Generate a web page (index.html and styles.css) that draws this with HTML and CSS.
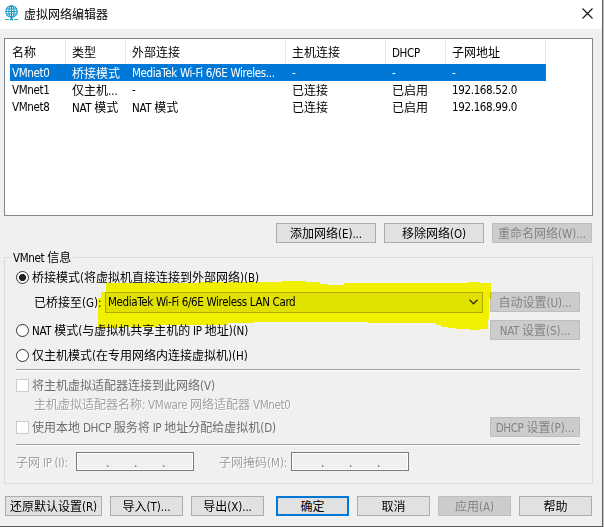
FILE: index.html
```html
<!DOCTYPE html>
<html lang="zh-CN">
<head>
<meta charset="utf-8">
<title>虚拟网络编辑器</title>
<link rel="stylesheet" href="styles.css">
</head>
<body>
<div class="window">
  <header class="titlebar">
    <svg class="logo" width="14" height="16" viewBox="0 0 14 16" fill="none">
      <g stroke="#1397c4" stroke-width="1.1"><circle cx="6.5" cy="6.5" r="5.7"/><ellipse cx="6.5" cy="6.5" rx="2.6" ry="5.7"/><path d="M1.5 4h10M1 6.500h11M1.500 9h10M6.500 1v11"/></g>
      <path d="M0 14.500h4M9 14.500h4" stroke="#29b7a5"/><path d="M5 14.500h3M6.500 12v2" stroke="#1397c4" stroke-width="1.400"/>
    </svg>
    <h1>虚拟网络编辑器</h1>
    <svg class="close" width="11" height="11" viewBox="0 0 11 11"><path d="M.5.5l10 10M10.500.5l-10 10" stroke="#111" stroke-width="1.100"/></svg>
  </header>
  <section class="table">
    <div class="tr head"><span>名称</span><span>类型</span><span>外部连接</span><span>主机连接</span><span class="l">DHCP</span><span>子网地址</span></div>
    <div class="tr selected"><span class="l">VMnet0</span><span>桥接模式</span><span class="l">MediaTek Wi-Fi 6/6E Wireles...</span><span class="l">-</span><span class="l">-</span><span class="l">-</span></div>
    <div class="tr"><span class="l">VMnet1</span><span>仅主机<span class="p">...</span></span><span class="l">-</span><span>已连接</span><span>已启用</span><span class="l">192.168.52.0</span></div>
    <div class="tr"><span class="l">VMnet8</span><span><span class="l">NAT </span>模式</span><span><span class="l">NAT </span>模式</span><span>已连接</span><span>已启用</span><span class="l">192.168.99.0</span></div>
  </section>
  <div class="actions">
    <button>添加网络<span class="p">(E)...</span></button><button>移除网络<span class="p">(O)</span></button><button disabled>重命名网络<span class="p">(W)...</span></button>
  </div>
  <fieldset class="group">
    <legend><span class="l">VMnet </span>信息</legend>
    <div class="row r1"><i class="radio on"></i><span>桥接模式<span class="p">(</span>将虚拟机直接连接到外部网络<span class="p">)(B)</span></span></div>
    <div class="row r2">
      <span class="bridge">已桥接至<span class="p">(G):</span></span>
      <div class="select"><span class="l">MediaTek Wi-Fi 6/6E Wireless LAN Card</span><svg width="9" height="6" viewBox="0 0 9 6"><path d="M.5.8l4 4 4-4" fill="none" stroke="#333" stroke-width="1.300"/></svg></div>
      <button disabled>自动设置<span class="p">(U)...</span></button>
      <svg class="marker" width="394" height="50" viewBox="0 0 394 50"><path fill="#ff0" d="M8 2H100V1H184V0H208V1H222V3H230V4H246V2H370V1H382V2H393V18H391V38H390V48H382V49H372V48H358V47H350V46H343V44H338V42H270V41H156V42H130V44H60V46H26V47H0V17H3V11H8Z"/></svg>
    </div>
    <div class="row r3"><i class="radio"></i><span><span class="l">NAT </span>模式<span class="p">(</span>与虚拟机共享主机的<span class="l"> IP </span>地址<span class="p">)(N)</span></span><button disabled><span class="l">NAT </span>设置<span class="p">(S)...</span></button></div>
    <div class="row r4"><i class="radio"></i><span>仅主机模式<span class="p">(</span>在专用网络内连接虚拟机<span class="p">)(H)</span></span></div>
    <hr>
    <div class="row r5"><i class="check"></i><span>将主机虚拟适配器连接到此网络<span class="p">(V)</span></span></div>
    <div class="row r6"><span>主机虚拟适配器名称<span class="l">: VMware </span>网络适配器<span class="l"> VMnet0</span></span></div>
    <div class="row r7"><i class="check"></i><span>使用本地<span class="l"> DHCP </span>服务将<span class="l"> IP </span>地址分配给虚拟机<span class="p">(D)</span></span><button disabled><span class="l">DHCP </span>设置<span class="p">(P)...</span></button></div>
    <hr>
    <div class="row r8"><span class="ip-label">子网<span class="l"> IP (I):</span></span><div class="ip"><b>.</b><b>.</b><b>.</b></div><span class="mask-label">子网掩码<span class="p">(M):</span></span><div class="ip"><b>.</b><b>.</b><b>.</b></div></div>
  </fieldset>
  <footer>
    <button>还原默认设置<span class="p">(R)</span></button><button>导入<span class="p">(T)...</span></button><button>导出<span class="p">(X)...</span></button><button class="primary">确定</button><button>取消</button><button disabled>应用<span class="p">(A)</span></button><button>帮助</button>
  </footer>
</div>
</body>
</html>
```

FILE: styles.css
```css
* { box-sizing: border-box; }
body { margin: 0; background: #c4c4c4; }
.window { display: flow-root; width: 603px; height: 527px; background: #f0f0f0; border-right: 1px solid #5c5c5c; border-bottom: 1px solid #5c5c5c; font: 12px/16px "Noto Sans CJK SC", sans-serif; color: #000; overflow: hidden; }
span { white-space: pre; }
.l, .p { font-family: "DejaVu Sans Condensed", "DejaVu Sans", sans-serif; font-stretch: condensed; font-size: 11.5px; line-height: 1; letter-spacing: -0.35px; }
.p { letter-spacing: -0.05px; }
.titlebar { height: 29px; background: #fff; display: flex; align-items: flex-start; padding: 5px 9px 0 5px; }
.titlebar h1 { font: inherit; margin: 1px 0 0 5px; flex: 1; }
.close { margin-top: 3px; }
.table { width: 589px; height: 178px; margin: 9px 0 0 4px; background: #fff; border: 1px solid #828790; }
.tr { display: grid; grid-template-columns: 56px 60px 160px 100px 60px 100px; width: 536px; height: 17px; margin-left: 5px; }
.tr > span { padding-left: 2px; height: 17px; line-height: 17px; overflow: hidden; }
.tr > span + span { padding-left: 6px; }
.tr > .l { line-height: 19px; }
.head { height: 25px; padding-top: 1px; }
.head > span { height: 24px; border-right: 1px solid #e5e5e5; line-height: 24px; }
.head > .l { line-height: 26px; }
.selected { background: #0078d7; color: #fff; }
button { height: 20px; padding: 0; border: 1px solid #adadad; background: #e1e1e1; font: inherit; line-height: 18px; color: #000; white-space: pre; }
button:disabled { background: #ccc; border-color: #bfbfbf; color: #838383; }
.actions { display: flex; gap: 8px; margin: 7px 0 0 276px; }
.actions button { width: 100px; }
.group { position: relative; width: 589px; height: 235px; margin: 6px 0 0 4px; padding: 0 11px; border: 1px solid #dcdcdc; min-width: 0; }
.group legend { padding: 0 2px 0 1px; margin-left: -4px; height: 16px; }
.row { display: flex; align-items: center; width: 559px; }
.radio { width: 13px; height: 13px; border: 1px solid #333; border-radius: 50%; background: #fff; margin-right: 3px; }
.radio.on { background: radial-gradient(circle, #222 0 3.3px, #fff 3.8px); }
.check { width: 13px; height: 13px; border: 1px solid #ccc; background: #fff; margin-right: 3px; }
.row > button { width: 90px; margin-left: auto; margin-right: -5px; }
.r1 { height: 20px; margin-top: 2px; }
.r2 { position: relative; height: 22px; margin-top: 4px; }
.bridge { width: 89px; padding-left: 18px; }
.select { width: 378px; height: 21px; border: 1px solid #adadad; background: #e1e1e1; display: flex; align-items: center; justify-content: space-between; padding: 0 4px 0 2px; }
.select .l { padding-top: 2px; }
.marker { position: absolute; left: 82px; top: -10px; mix-blend-mode: multiply; }
.r3 { height: 20px; margin-top: 7px; }
.r4 { height: 20px; margin-top: 5px; }
hr { width: 564px; height: 2px; margin: 4px 0 0; border: 0; background: linear-gradient(#a0a0a0 50%, #fff 50%); }
.r5 { height: 18px; margin-top: 5px; color: #6d6d6d; }
.r6 { height: 18px; margin-top: 1px; padding-left: 18px; color: #a0a0a0; text-shadow: 1px 1px #fff; }
.r7 { height: 20px; margin-top: 4px; color: #6d6d6d; }
.r7 + hr { margin-top: 7px; }
.r8 { height: 19px; margin-top: 6px; color: #a0a0a0; text-shadow: 1px 1px #fff; }
.ip-label { width: 60px; }
.ip { width: 118px; height: 19px; border: 1px solid #7a7a7a; box-shadow: inset 0 0 0 1px #fff; display: flex; gap: 25px; padding-left: 29px; line-height: 18px; color: #6d6d6d; text-shadow: none; }
.ip b { width: 3px; font-weight: normal; }
.mask-label { width: 97px; padding-left: 25px; }
footer { display: grid; grid-template-columns: 97px 73px 73px 73px 73px 73px 73px; column-gap: 8px; margin: 12px 0 0 5px; }
footer .primary { border: 2px solid #0078d7; line-height: 16px; }
footer button:nth-child(n+4) { position: relative; left: 4px; }
```
